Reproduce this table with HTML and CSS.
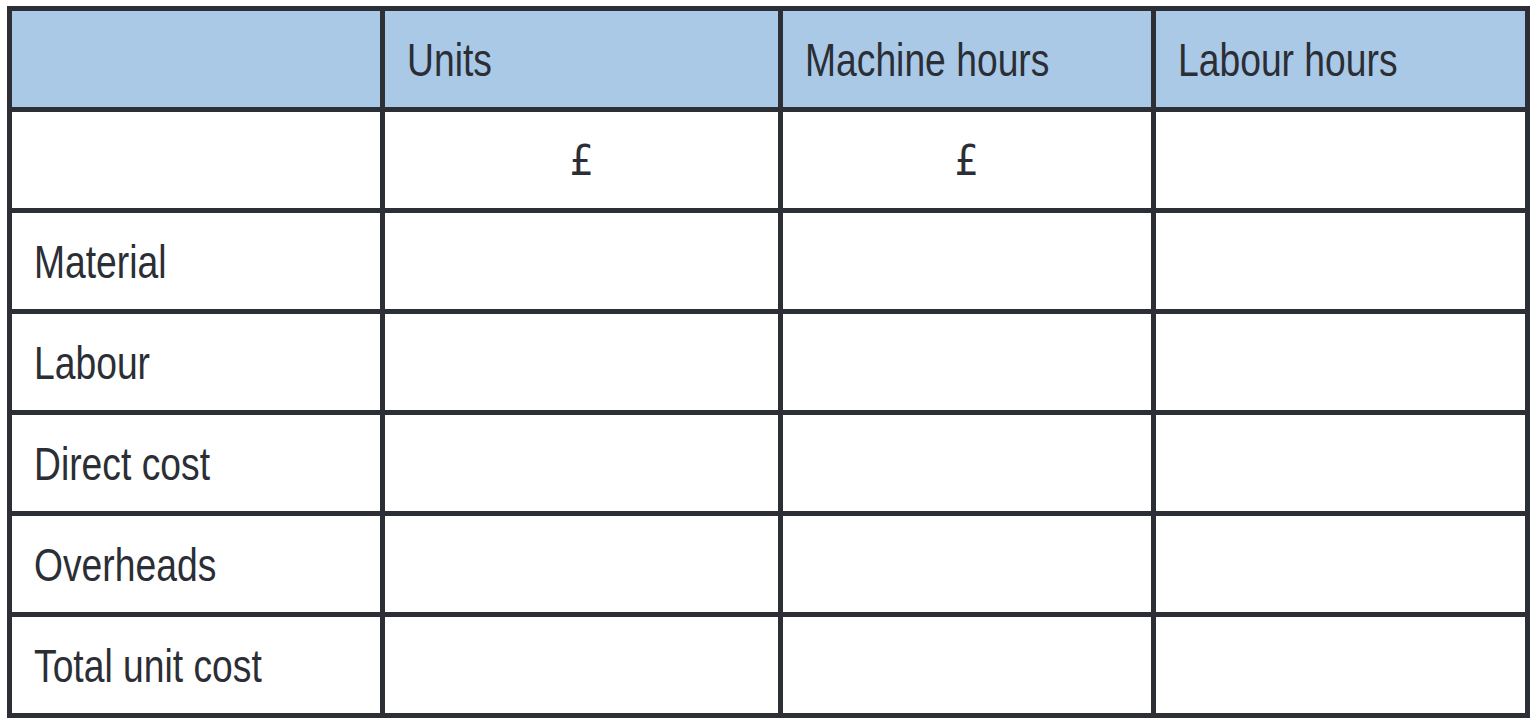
FILE: index.html
```html
<!DOCTYPE html>
<html>
<head>
<meta charset="utf-8">
<link rel="stylesheet" href="styles.css">
</head>
<body>
<div class="grid">
  <div class="cell head"></div>
  <div class="cell head"><span class="txt">Units</span></div>
  <div class="cell head"><span class="txt">Machine hours</span></div>
  <div class="cell head"><span class="txt">Labour hours</span></div>

  <div class="cell"></div>
  <div class="cell center"><span class="txt">£</span></div>
  <div class="cell center"><span class="txt">£</span></div>
  <div class="cell"></div>

  <div class="cell"><span class="txt">Material</span></div>
  <div class="cell"></div>
  <div class="cell"></div>
  <div class="cell"></div>

  <div class="cell"><span class="txt">Labour</span></div>
  <div class="cell"></div>
  <div class="cell"></div>
  <div class="cell"></div>

  <div class="cell"><span class="txt">Direct cost</span></div>
  <div class="cell"></div>
  <div class="cell"></div>
  <div class="cell"></div>

  <div class="cell"><span class="txt">Overheads</span></div>
  <div class="cell"></div>
  <div class="cell"></div>
  <div class="cell"></div>

  <div class="cell"><span class="txt">Total unit cost</span></div>
  <div class="cell"></div>
  <div class="cell"></div>
  <div class="cell"></div>
</div>
</body>
</html>
```

FILE: styles.css
```css
html, body {
  margin: 0;
  padding: 0;
  background: #ffffff;
}

body {
  padding: 6px 0 0 7px;
}

.grid {
  display: grid;
  grid-template-columns: 368px 393px 368px 369px;
  grid-auto-rows: 96px;
  gap: 5px;
  padding: 5px;
  width: max-content;
  background: #2c2f36;
  font-family: "Liberation Sans", Arial, sans-serif;
  font-size: 46px;
  color: #2b2e35;
}

.cell {
  background: #ffffff;
  display: flex;
  align-items: center;
  padding-left: 22px;
  white-space: nowrap;
}

.cell.head {
  background: #a9c9e7;
}

.txt {
  display: inline-block;
  transform: scaleX(0.81);
  transform-origin: left center;
  line-height: 1;
  margin-top: 1px;
}

.cell.center {
  justify-content: center;
  padding-left: 0;
}

.cell.center .txt {
  transform-origin: center center;
  font-family: "DejaVu Sans", sans-serif;
  font-size: 43px;
  transform: scaleX(0.88);
}
```
